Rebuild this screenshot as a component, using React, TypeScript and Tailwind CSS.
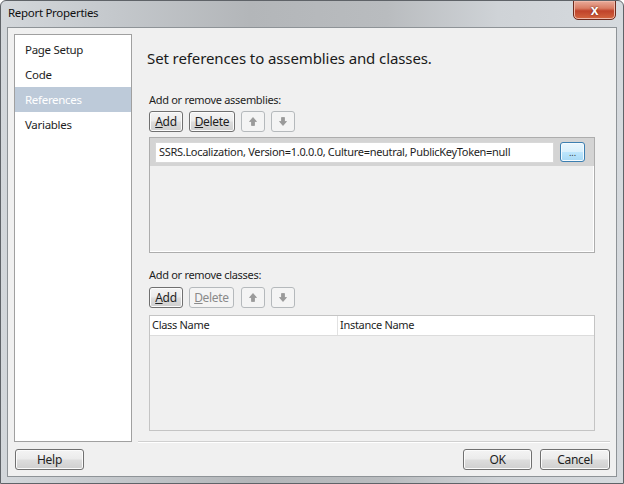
import React from "react";

function Arrow({ down }: { down?: boolean }) {
  return (
    <svg width="8" height="9" viewBox="0 0 8 9" className={down ? "rotate-180" : ""}>
      <path d="M4 0.5 L7.5 4.5 L5.5 4.5 L5.5 8.5 L2.5 8.5 L2.5 4.5 L0.5 4.5 Z" fill="#9a9a9a" stroke="#8a8a8a" strokeWidth="0.6" />
    </svg>
  );
}

function Btn({
  children,
  className,
  disabled,
}: {
  children: React.ReactNode;
  className: string;
  disabled?: boolean;
}) {
  return (
    <div
      className={
        "flex items-center justify-center rounded-[3px] border text-[12px] " +
        (disabled
          ? "border-[#b5b9bc] bg-[#f4f4f4] text-[#8a8a8a] "
          : "border-[#707070] bg-[linear-gradient(#f4f4f4,#ebebeb_48%,#dddddd_52%,#cfcfcf)] text-[#1e1e1e] shadow-[inset_0_0_0_1px_#fbfbfb] ") +
        className
      }
    >
      {children}
    </div>
  );
}

export default function App() {
  return (
    <div className="w-[624px] h-[484px] flex flex-col border border-[#5f6368] rounded-t-[6px] bg-[linear-gradient(90deg,#d3d7db_0%,#c4c8cc_18%,#b3b6b9_40%,#b9bcbf_62%,#cfd3d7_80%,#d6dade_100%)] font-['Noto_Sans',sans-serif] text-[11px] tracking-[-0.3px] text-[#1e1e1e] overflow-hidden">
      <div className="h-[26px] flex items-start justify-between pl-[7px] pr-[7px]">
        <span className="mt-[4px] text-[11.5px] leading-[16px] text-[#101010]">Report Properties</span>
        <div className="-mt-[1px] w-[43px] h-[20px] rounded-b-[5px] border border-[#6e2b1d] bg-[linear-gradient(#e9ab9a,#d97d64_40%,#c0432a_55%,#d4663f)] flex items-center justify-center shadow-[inset_0_0_0_1px_#f0b8a8]">
          <span className="font-['Liberation_Sans',sans-serif] font-bold text-[14px] leading-[14px] text-white [text-shadow:0_0_2px_#5a1a10]">x</span>
        </div>
      </div>
      <div className="flex-1 mx-[6px] mb-[6px] border border-[#8e9397] bg-[#f0f0f0] flex flex-col">
        <div className="flex-1 flex px-[6px] pt-[6px] gap-[6px]">
          <div className="w-[118px] border border-[#a0a0a0] bg-white pt-[2px] flex flex-col text-[11.5px]">
            <div className="h-[25px] flex items-center pl-[10px]">Page Setup</div>
            <div className="h-[25px] flex items-center pl-[10px]">Code</div>
            <div className="h-[25px] flex items-center pl-[10px] bg-[#bdcad9] text-white">References</div>
            <div className="h-[25px] flex items-center pl-[10px]">Variables</div>
          </div>
          <div className="flex-1 flex flex-col border-b border-[#d0d0d0] shadow-[0_1px_0_#ffffff]">
            <div className="mt-[14px] pl-[9px] text-[15px] tracking-[-0.1px] leading-[20px] text-[#1a1a1a]">
              Set references to assemblies and classes.
            </div>
            <div className="pl-[11px] flex flex-col">
              <div className="mt-[24px] leading-[16px]">Add or remove assemblies:</div>
              <div className="mt-[3px] flex">
                <Btn className="w-[34px] h-[21px]">
                  <span><span className="underline">A</span>dd</span>
                </Btn>
                <Btn className="ml-[6px] w-[46px] h-[21px]">
                  <span><span className="underline">D</span>elete</span>
                </Btn>
                <Btn disabled className="ml-[6px] w-[24px] h-[21px]">
                  <Arrow />
                </Btn>
                <Btn disabled className="ml-[6px] w-[24px] h-[21px]">
                  <Arrow down />
                </Btn>
              </div>
              <div className="mt-[5px] w-[446px] h-[116px] border border-[#adadad] bg-[#f0f0f0] shadow-[inset_-1px_-1px_0_#ffffff]">
                <div className="h-[28px] bg-[#d4d4d4] flex items-center pl-[5px]">
                  <div className="w-[399px] h-[21px] bg-white border border-[#d8d8d8] flex items-center pl-[3px] whitespace-nowrap overflow-hidden">
                    SSRS.Localization, Version=1.0.0.0, Culture=neutral, PublicKeyToken=null
                  </div>
                  <div className="ml-[6px] w-[25px] h-[20px] rounded-[3px] border border-[#3c7fb1] bg-[linear-gradient(#eaf6fd,#d9f0fc_50%,#bee6fd_50%,#a7d9f5)] flex items-end justify-center pb-[4px] shadow-[inset_0_0_0_1px_#f4fbff]">
                    <span className="text-[9px] leading-[9px] tracking-normal text-[#333]">...</span>
                  </div>
                </div>
              </div>
              <div className="mt-[14px] leading-[16px]">Add or remove classes:</div>
              <div className="mt-[4px] flex">
                <Btn className="w-[34px] h-[21px]">
                  <span><span className="underline">A</span>dd</span>
                </Btn>
                <Btn disabled className="ml-[6px] w-[45px] h-[21px]">
                  <span><span className="underline">D</span>elete</span>
                </Btn>
                <Btn disabled className="ml-[7px] w-[24px] h-[21px]">
                  <Arrow />
                </Btn>
                <Btn disabled className="ml-[6px] w-[24px] h-[21px]">
                  <Arrow down />
                </Btn>
              </div>
              <div className="mt-[7px] w-[446px] h-[116px] border border-[#c4c4c4] bg-[#f0f0f0] flex flex-col">
                <div className="h-[20px] bg-white border-b border-[#dcdcdc] flex items-center">
                  <div className="w-[188px] h-full flex items-center pl-[2px] border-r border-[#e2e2e2]">Class Name</div>
                  <div className="flex-1 pl-[2px]">Instance Name</div>
                </div>
              </div>
            </div>
          </div>
        </div>
        <div className="h-[34px] flex items-start justify-between pt-[7px] pl-[7px] pr-[6px]">
          <Btn className="w-[69px] h-[21px] border-[#8a8a8a]">Help</Btn>
          <div className="flex gap-[8px]">
            <Btn className="w-[69px] h-[21px] border-[#8a8a8a]">OK</Btn>
            <Btn className="w-[70px] h-[21px] border-[#8a8a8a]">Cancel</Btn>
          </div>
        </div>
      </div>
    </div>
  );
}
